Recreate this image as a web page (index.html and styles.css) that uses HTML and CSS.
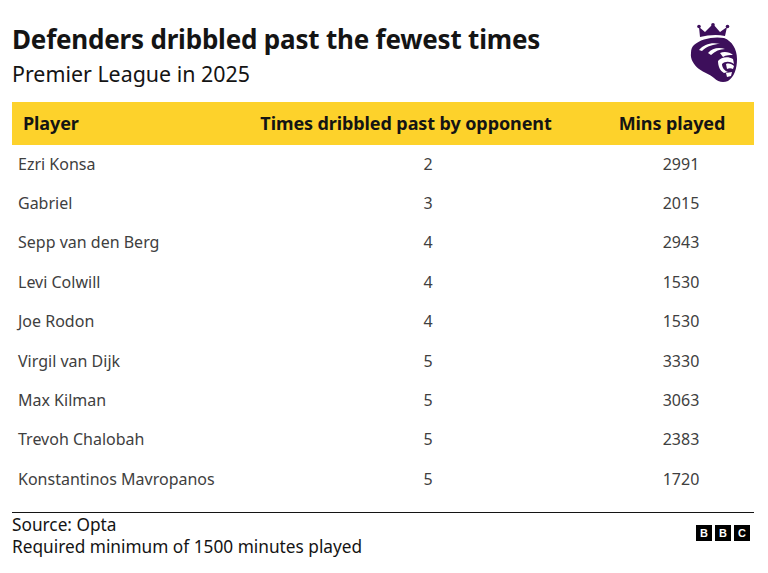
FILE: index.html
```html
<!DOCTYPE html>
<html>
<head>
<meta charset="utf-8">
<link rel="stylesheet" href="styles.css">
</head>
<body>
<div class="page">
  <header class="head">
    <div class="titles">
      <h1 class="title">Defenders dribbled past the fewest times</h1>
      <p class="subtitle">Premier League in 2025</p>
    </div>
    <svg class="pl-logo" viewBox="0 0 48 60" width="48" height="60" aria-label="Premier League">
      <g fill="#3d0f5b">
        <path d="M10 14 L9 4 L15 9 L23 1 L30 9 L37 4 L35 13 C27 11 18 12 10 14 Z"/>
        <circle cx="9" cy="3.5" r="1.8"/>
        <circle cx="23" cy="1.8" r="1.8"/>
        <circle cx="37.5" cy="3.5" r="1.8"/>
        <path d="M4 22 C10 16 24 13 34 15 C42 18 47 26 47 36 C47 46 44 54 38 58 C33 60 28 59 24 55 C20 51 14 50 9 46 C4 42 0 36 1 30 C1 26 2 24 4 22 Z"/>
      </g>
      <g fill="#fff">
        <path d="M9 27 C14 21 22 19 30 21 C24 21 17 23 12 28 Z"/>
        <path d="M18 30 C22 25 29 24 35 26 C30 26 25 28 21 32 Z"/>
        <path d="M30 30 C34 28 40 29 43 32 C40 32 36 32 33 34 Z"/>
        <path d="M28 38 C31 34 38 33 43 36 L44 41 C40 38 35 38 32 41 C32 45 35 48 38 49 L34 50 C30 48 28 43 28 38 Z"/>
        <path d="M36 41 C39 40 42 41 44 43 L43 46 C41 45 39 45 37 46 Z"/>
        <path d="M36 50 L42 49 L41 53 L37 54 Z"/>
      </g>
    </svg>
  </header>

  <div class="table">
    <div class="row head-row">
      <div class="c1">Player</div>
      <div class="c2">Times dribbled past by opponent</div>
      <div class="c3">Mins played</div>
    </div>
    <div class="row"><div class="c1">Ezri Konsa</div><div class="c2">2</div><div class="c3">2991</div></div>
    <div class="row"><div class="c1">Gabriel</div><div class="c2">3</div><div class="c3">2015</div></div>
    <div class="row"><div class="c1">Sepp van den Berg</div><div class="c2">4</div><div class="c3">2943</div></div>
    <div class="row"><div class="c1">Levi Colwill</div><div class="c2">4</div><div class="c3">1530</div></div>
    <div class="row"><div class="c1">Joe Rodon</div><div class="c2">4</div><div class="c3">1530</div></div>
    <div class="row"><div class="c1">Virgil van Dijk</div><div class="c2">5</div><div class="c3">3330</div></div>
    <div class="row"><div class="c1">Max Kilman</div><div class="c2">5</div><div class="c3">3063</div></div>
    <div class="row"><div class="c1">Trevoh Chalobah</div><div class="c2">5</div><div class="c3">2383</div></div>
    <div class="row"><div class="c1">Konstantinos Mavropanos</div><div class="c2">5</div><div class="c3">1720</div></div>
  </div>

  <footer class="foot">
    <div class="notes">
      <p>Source: Opta</p>
      <p>Required minimum of 1500 minutes played</p>
    </div>
    <div class="bbc" aria-label="BBC"><span>B</span><span>B</span><span>C</span></div>
  </footer>
</div>
</body>
</html>
```

FILE: styles.css
```css
* { box-sizing: border-box; }
html, body { margin: 0; padding: 0; background: #fff; }
body { font-family: "Noto Sans", "Open Sans", sans-serif; color: #141414; }
.page { width: 768px; height: 573px; padding: 0 14px 0 12px; }

.head { display: flex; justify-content: space-between; align-items: flex-start; height: 102px; }
.titles { padding-top: 22px; }
.title { margin: 0; font-size: 26px; line-height: 34px; font-weight: 700; letter-spacing: -0.2px; color: #141414; }
.subtitle { margin: 4px 0 0; font-size: 21.4px; line-height: 28px; color: #141414; letter-spacing: 0; }
.pl-logo { margin-top: 23px; margin-right: 16px; display: block; }

.table { display: flex; flex-direction: column; }
.row { display: grid; grid-template-columns: 230px 328px 184px; height: 39.4px; align-items: center; font-size: 16px; color: #404040; padding-bottom: 2px; }
.row .c1 { padding-left: 6px; }
.row .c2 { text-align: center; padding-left: 44px; }
.row .c3 { text-align: center; padding-left: 38px; }
.head-row { height: 43px; background: #fdd22b; font-weight: 700; font-size: 18px; color: #141414; letter-spacing: -0.1px; padding-bottom: 2px; }
.head-row .c1 { padding-left: 11px; }
.head-row .c2 { padding-left: 0; }
.head-row .c3 { padding-left: 20px; }

.foot { margin-top: 12px; border-top: 1px solid #141414; display: flex; justify-content: space-between; align-items: flex-start; }
.notes { padding-top: 1px; }
.notes p { margin: 0; font-size: 17.25px; line-height: 22px; color: #141414; letter-spacing: 0; }
.bbc { display: flex; gap: 3px; margin-top: 12px; margin-right: 4px; }
.bbc span { width: 16px; height: 16px; background: #000; color: #fff; font-family: "Liberation Sans", Arial, sans-serif; font-weight: 700; font-size: 11px; line-height: 16px; text-align: center; }
```
